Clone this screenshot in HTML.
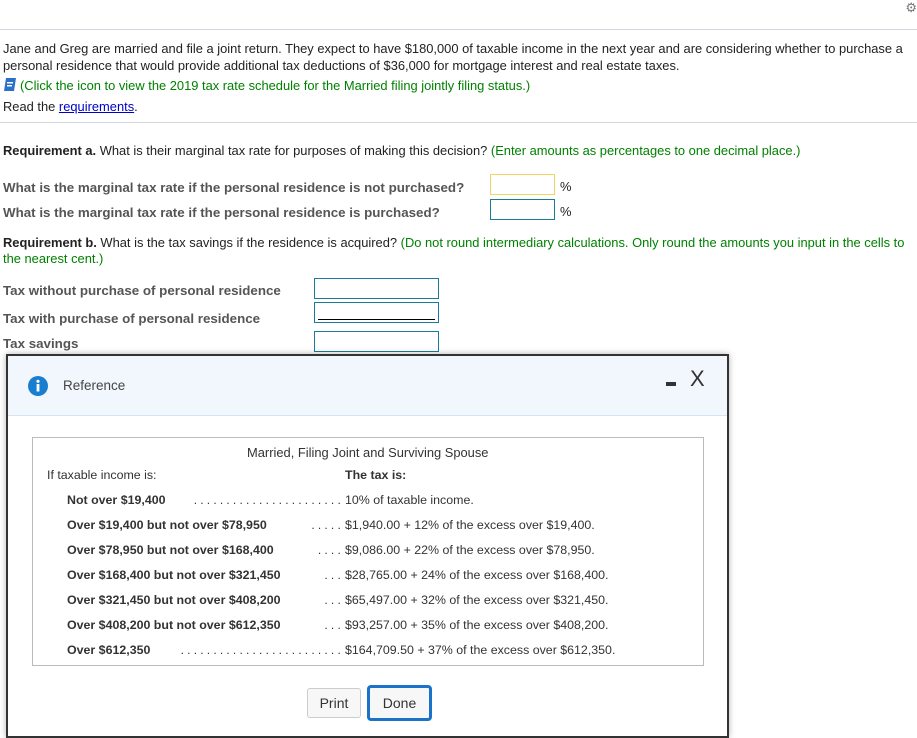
<!DOCTYPE html>
<html><head><meta charset="utf-8"><style>
body{margin:0;width:917px;height:730px;overflow:hidden;background:#fff;font-family:"Liberation Sans",Arial,sans-serif;position:relative;color:#222}
.a{position:absolute;white-space:nowrap}
.t{font-size:12.9px}
.g{color:#008000}
.lb{font-weight:bold;color:#555;font-size:13.35px}
.box{position:absolute;border:1px solid #1a7a9a;background:#fff}
.hr{position:absolute;left:0;width:917px;height:1px;background:#d0d4dc}
.m{font-size:12.4px;color:#333}
.mb{font-size:12.4px;font-weight:bold;color:#333}
.d{position:absolute;font-size:12px;color:#333;letter-spacing:3.2px;text-align:right;overflow:hidden;direction:rtl}
</style></head><body>
<div class="hr" style="top:29px"></div>
<div class="a" style="right:0;top:0;font-size:13px;color:#777">&#9881;</div>
<div class="a t" style="left:3px;top:41px">Jane and Greg are married and file a joint return. They expect to have $180,000 of taxable income in the next year and are considering whether to purchase a</div>
<div class="a t" style="left:3px;top:58px">personal residence that would provide additional tax deductions of $36,000 for mortgage interest and real estate taxes.</div>
<svg class="a" style="left:3px;top:77px" width="14" height="15" viewBox="0 0 14 15"><path d="M3 1h10l-2 13H1z" fill="#2a72c8"/><rect x="4" y="5" width="6" height="1.5" fill="#fff"/><rect x="4" y="8" width="5" height="1.5" fill="#fff"/></svg>
<div class="a t g" style="left:20px;top:78px">(Click the icon to view the 2019 tax rate schedule for the Married filing jointly filing status.)</div>
<div class="a t" style="left:3px;top:99px">Read the <span style="color:#00c;text-decoration:underline">requirements</span>.</div>
<div class="hr" style="top:122px"></div>
<div class="a t" style="left:3px;top:143px"><b>Requirement a.</b> What is their marginal tax rate for purposes of making this decision? <span class="g">(Enter amounts as percentages to one decimal place.)</span></div>
<div class="a lb" style="left:3px;top:180px">What is the marginal tax rate if the personal residence is not purchased?</div>
<div class="box" style="left:490px;top:174px;width:63px;height:19px;border-color:#f0d860"></div>
<div class="a t" style="left:560px;top:179px">%</div>
<div class="a lb" style="left:3px;top:205px">What is the marginal tax rate if the personal residence is purchased?</div>
<div class="box" style="left:490px;top:199px;width:63px;height:19px"></div>
<div class="a t" style="left:560px;top:204px">%</div>
<div class="a t" style="left:3px;top:235px"><b>Requirement b.</b> What is the tax savings if the residence is acquired? <span class="g">(Do not round intermediary calculations. Only round the amounts you input in the cells to</span></div>
<div class="a t g" style="left:3px;top:251px">the nearest cent.)</div>
<div class="a lb" style="left:3px;top:283px">Tax without purchase of personal residence</div>
<div class="box" style="left:314px;top:278px;width:123px;height:19px"></div>
<div class="a lb" style="left:3px;top:311px">Tax with purchase of personal residence</div>
<div class="box" style="left:314px;top:302px;width:123px;height:19px"><div style="position:absolute;left:3px;right:3px;top:16px;height:1px;background:#000"></div></div>
<div class="a lb" style="left:3px;top:336px">Tax savings</div>
<div class="box" style="left:314px;top:331px;width:123px;height:19px"></div>

<div style="position:absolute;left:6px;top:354px;width:719px;height:380px;border:2px solid #333;background:#fff;box-shadow:0 0 6px rgba(0,0,0,.3)">
<div style="position:absolute;left:0;top:0;width:719px;height:59px;background:#f2f7fd;border-bottom:1px solid #d4e4f6"></div>
<svg class="a" style="left:20px;top:20px" width="20" height="20" viewBox="0 0 20 20"><circle cx="10" cy="10" r="10" fill="#1a7ed0"/><rect x="8.6" y="8" width="2.8" height="7.5" fill="#fff"/><circle cx="10" cy="5.3" r="1.6" fill="#fff"/></svg>
<div class="a" style="left:55px;top:22px;font-size:13.5px;color:#444">Reference</div>
<div class="a" style="left:658px;width:10px;height:4px;background:#333;top:26px"></div>
<div class="a" style="left:682px;top:10px;font-size:22px;color:#333">X</div>
<div style="position:absolute;left:24px;top:81px;width:670px;height:227px;border:1px solid #bbb">
<div class="a m" style="left:214px;top:7px;font-size:12.9px">Married, Filing Joint and Surviving Spouse</div>
<div class="a m" style="left:14px;top:30px">If taxable income is:</div>
<div class="a mb" style="left:312px;top:30px">The tax is:</div>
<div class="a mb" style="left:34px;top:55px">Not over $19,400</div><div class="d" style="left:160px;width:151px;top:55px">........................................</div><div class="a m" style="left:312px;top:55px">10% of taxable income.</div>
<div class="a mb" style="left:34px;top:80px">Over $19,400 but not over $78,950</div><div class="d" style="left:268px;width:43px;top:80px">.....</div><div class="a m" style="left:312px;top:80px">$1,940.00 + 12% of the excess over $19,400.</div>
<div class="a mb" style="left:34px;top:105px">Over $78,950 but not over $168,400</div><div class="d" style="left:277px;width:34px;top:105px">....</div><div class="a m" style="left:312px;top:105px">$9,086.00 + 22% of the excess over $78,950.</div>
<div class="a mb" style="left:34px;top:130px">Over $168,400 but not over $321,450</div><div class="d" style="left:286px;width:25px;top:130px">...</div><div class="a m" style="left:312px;top:130px">$28,765.00 + 24% of the excess over $168,400.</div>
<div class="a mb" style="left:34px;top:155px">Over $321,450 but not over $408,200</div><div class="d" style="left:286px;width:25px;top:155px">...</div><div class="a m" style="left:312px;top:155px">$65,497.00 + 32% of the excess over $321,450.</div>
<div class="a mb" style="left:34px;top:180px">Over $408,200 but not over $612,350</div><div class="d" style="left:286px;width:25px;top:180px">...</div><div class="a m" style="left:312px;top:180px">$93,257.00 + 35% of the excess over $408,200.</div>
<div class="a mb" style="left:34px;top:205px">Over $612,350</div><div class="d" style="left:145px;width:166px;top:205px">........................................</div><div class="a m" style="left:312px;top:205px">$164,709.50 + 37% of the excess over $612,350.</div>
</div>
<div class="a" style="left:299px;top:332px;width:52px;height:28px;border:1px solid #ccc;border-radius:3px;background:#f7f7f7;font-size:14px;color:#333;text-align:center;line-height:28px">Print</div>
<div class="a" style="left:359px;top:329px;width:59px;height:30px;border:3px solid #1a73c8;border-radius:4px;background:#f7f7f7;font-size:14px;color:#333;text-align:center;line-height:30px">Done</div>
</div>
</body></html>
